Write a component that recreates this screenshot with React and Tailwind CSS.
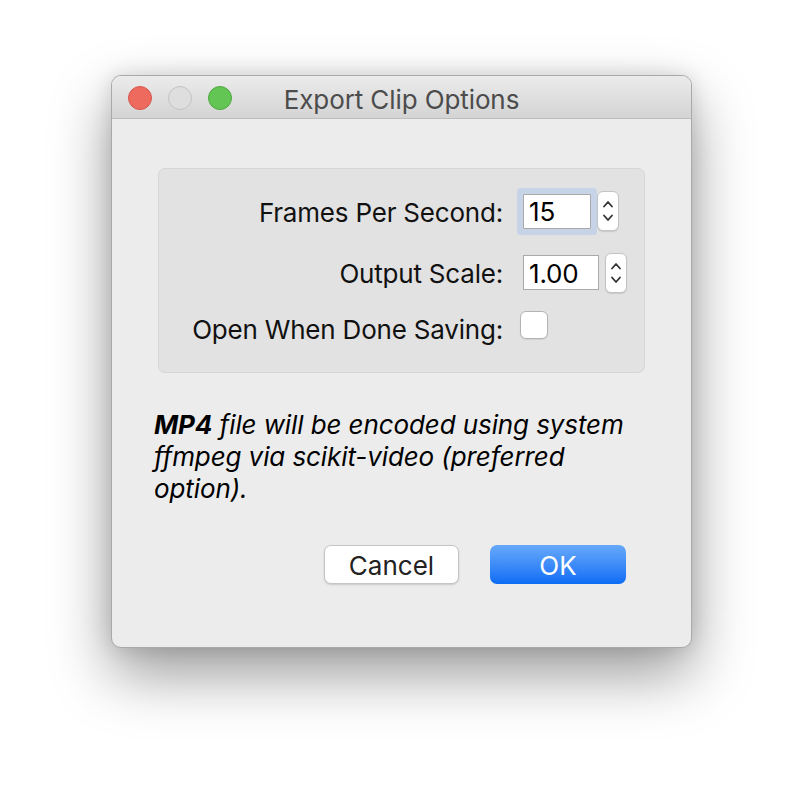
import React from 'react';

const font = { fontFamily: 'Inter, "Noto Sans", sans-serif' };

function Light({ fill, ring }) {
  return <div className={`w-[24px] h-[24px] rounded-full border ${fill} ${ring}`}></div>;
}

function Stepper() {
  return (
    <div className="w-[22px] h-[40px] rounded-[6px] bg-white border border-[#c4c4c4] shadow-[0_1px_1px_rgba(0,0,0,0.12)] flex flex-col items-center justify-center gap-[6px]">
      <svg width="12" height="8" viewBox="0 0 12 8" fill="none" stroke="#333" strokeWidth="1.8" strokeLinecap="round" strokeLinejoin="round">
        <path d="M2 6.5 L6 2 L10 6.5" />
      </svg>
      <svg width="12" height="8" viewBox="0 0 12 8" fill="none" stroke="#333" strokeWidth="1.8" strokeLinecap="round" strokeLinejoin="round">
        <path d="M2 1.5 L6 6 L10 1.5" />
      </svg>
    </div>
  );
}

export default function App() {
  return (
    <div className="w-[804px] h-[796px] bg-white pt-[75px]" style={font}>
      <div className="ml-[111px] w-[581px] h-[573px] rounded-[10px] bg-[#ececec] border border-[#a9a9a9] overflow-hidden shadow-[0_26px_60px_rgba(0,0,0,0.4),0_0_20px_rgba(0,0,0,0.12)] flex flex-col">
        {/* title bar */}
        <div className="h-[43px] shrink-0 bg-gradient-to-b from-[#ebebeb] to-[#d4d4d4] border-b border-[#bdbdbd] relative flex items-center">
          <div className="flex gap-[16px] pl-[16px] pt-[1px]">
            <Light fill="bg-[#ee6a5f]" ring="border-[#d5574c]" />
            <Light fill="bg-[#dedede]" ring="border-[#c3c3c3]" />
            <Light fill="bg-[#62c554]" ring="border-[#4fa83f]" />
          </div>
          <div className="absolute inset-0 flex items-center justify-center text-[26px] tracking-[-0.1px] text-[#4c4c4c] pt-[4px]">Export Clip Options</div>
        </div>

        {/* body */}
        <div className="flex-1 px-[46px] pt-[49px]">
          <div className="h-[205px] rounded-[7px] bg-[#e2e2e2] border border-[#d6d6d6] pt-[17px] text-[26px] tracking-[-0.2px] text-[#111]">
            <div className="h-[50px] flex items-center">
              <div className="w-[344px] text-right pt-[2px]">Frames Per Second:</div>
              <div className="ml-[20px] flex items-center gap-[6px]">
                <div className="w-[68px] h-[35px] bg-white border border-[#a9a9a9] shadow-[0_0_0_6px_#c7d4e7] rounded-[1px] pl-[5px] pt-[2px] flex items-center leading-none text-black">15</div>
                <Stepper />
              </div>
            </div>
            <div className="h-[45px] mt-[14px] flex items-center">
              <div className="w-[344px] text-right pt-[2px]">Output Scale:</div>
              <div className="ml-[20px] flex items-center gap-[6px]">
                <div className="w-[76px] h-[35px] bg-white border border-[#a9a9a9] pl-[5px] pt-[2px] flex items-center leading-none text-black">1.00</div>
                <Stepper />
              </div>
            </div>
            <div className="h-[48px] mt-[6px] flex items-center">
              <div className="w-[344px] text-right pt-[8px]">Open When Done Saving:</div>
              <div className="ml-[17px] w-[28px] h-[28px] rounded-[6px] bg-white border border-[#b3b3b3] shadow-[0_1px_1px_rgba(0,0,0,0.08)]"></div>
            </div>
          </div>

          <p className="mt-[36px] -ml-[4px] w-[494px] text-[26px] leading-[32px] italic tracking-[-0.1px] text-black">
            <b className="font-bold">MP4</b> file will be encoded using system ffmpeg via scikit-video (preferred option).
          </p>

          <div className="mt-[40px] flex justify-end gap-[31px] pr-[19px]">
            <button className="w-[135px] h-[39px] rounded-[7px] bg-white border border-[#c5c5c5] shadow-[0_1px_2px_rgba(0,0,0,0.15)] text-[26px] text-[#222] leading-none pt-[2px]">Cancel</button>
            <button className="w-[136px] h-[39px] rounded-[7px] bg-gradient-to-b from-[#66a9fa] to-[#0a6cf5] text-[26px] text-white leading-none pt-[2px]">OK</button>
          </div>
        </div>
      </div>
    </div>
  );
}
